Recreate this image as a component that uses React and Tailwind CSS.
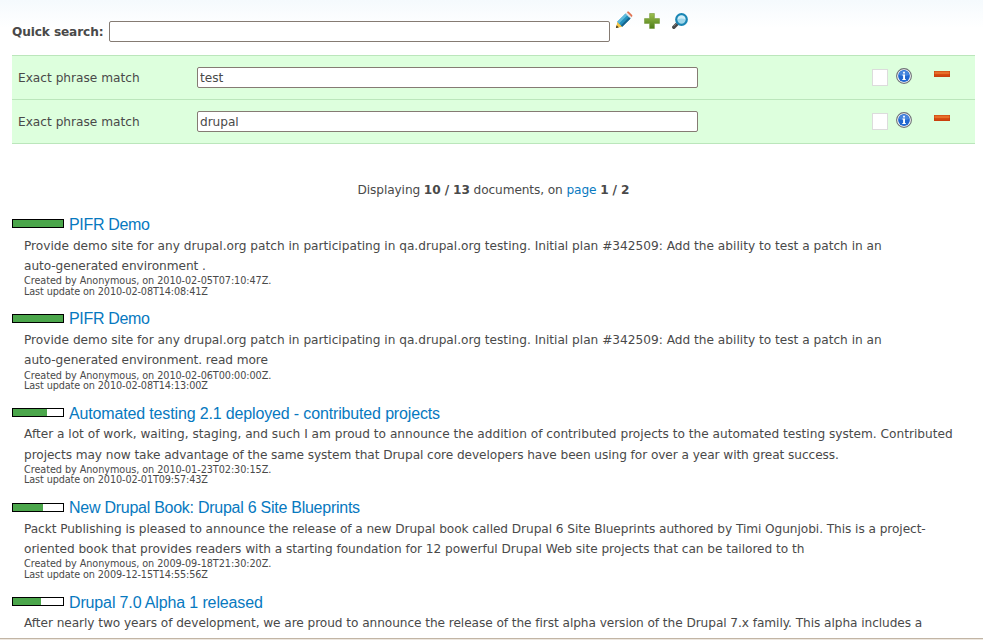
import React, { useState } from 'react'

const results = [
  {
    title: 'PIFR Demo',
    titleSpacing: 'tracking-[-0.33px]',
    score: 50,
    lines: [
      ['Provide demo site for any drupal.org patch in participating in qa.drupal.org testing. Initial plan #342509: Add the ability to test a patch in an', 'tracking-[-0.005px]'],
      ['auto-generated environment .', 'tracking-[-0.07px]']
    ],
    created: '2010-02-05T07:10:47Z',
    updated: '2010-02-08T14:08:41Z'
  },
  {
    title: 'PIFR Demo',
    titleSpacing: 'tracking-[-0.33px]',
    score: 50,
    lines: [
      ['Provide demo site for any drupal.org patch in participating in qa.drupal.org testing. Initial plan #342509: Add the ability to test a patch in an', 'tracking-[-0.005px]'],
      ['auto-generated environment. read more', 'tracking-[-0.07px]']
    ],
    created: '2010-02-06T00:00:00Z',
    updated: '2010-02-08T14:13:00Z'
  },
  {
    title: 'Automated testing 2.1 deployed - contributed projects',
    titleSpacing: 'tracking-[-0.15px]',
    score: 34,
    lines: [
      ['After a lot of work, waiting, staging, and such I am proud to announce the addition of contributed projects to the automated testing system. Contributed', 'tracking-[-0.006px]'],
      ['projects may now take advantage of the same system that Drupal core developers have been using for over a year with great success.', 'tracking-[-0.075px]']
    ],
    created: '2010-01-23T02:30:15Z',
    updated: '2010-02-01T09:57:43Z'
  },
  {
    title: 'New Drupal Book: Drupal 6 Site Blueprints',
    titleSpacing: 'tracking-[-0.26px]',
    score: 30,
    lines: [
      ['Packt Publishing is pleased to announce the release of a new Drupal book called Drupal 6 Site Blueprints authored by Timi Ogunjobi. This is a project-', 'tracking-[-0.067px]'],
      ['oriented book that provides readers with a starting foundation for 12 powerful Drupal Web site projects that can be tailored to th', 'tracking-[-0.043px]']
    ],
    created: '2009-09-18T21:30:20Z',
    updated: '2009-12-15T14:55:56Z'
  },
  {
    title: 'Drupal 7.0 Alpha 1 released',
    titleSpacing: 'tracking-[-0.14px]',
    score: 28,
    lines: [
      ['After nearly two years of development, we are proud to announce the release of the first alpha version of the Drupal 7.x family. This alpha includes a', 'tracking-[-0.07px]']
    ]
  }
]

function PencilIcon() {
  return (
    <svg width="18" height="18" viewBox="0 0 18 18">
      <path d="M1 17 2.4 10.8l5 5z" fill="#f7c544" />
      <path d="m.9 17.1.7-2.9 2.2 2.2z" fill="#3b3320" />
      <path d="M2.2 10.8 10.6 2.4l5 5-8.4 8.4z" fill="#2490bd" />
      <path d="m2.4 10.8 8.2-8.3 1.7 1.7-8.3 8.2z" fill="#5fbbdc" />
      <path d="m5.9 14.5 8.3-8.4 1.4 1.4-8.3 8.3z" fill="#17648c" />
      <path d="m10.6 2.5 1.3-1.3 5 5-1.3 1.3z" fill="#e4e8ea" />
      <path d="m11.9 1.2.4-.4c.5-.4 1.1-.4 1.6 0l3.2 3.2c.4.5.4 1.1 0 1.6l-.5.5z" fill="#e0704e" />
    </svg>
  )
}

function PlusIcon() {
  return (
    <svg width="16" height="16" viewBox="0 0 16 16">
      <defs>
        <linearGradient id="plus" x1="0" y1="0" x2="0" y2="1">
          <stop offset="0" stopColor="#9cc04e" />
          <stop offset="1" stopColor="#4d7d18" />
        </linearGradient>
      </defs>
      <path d="M5.6.5h4.8v5.1h5.1v4.8h-5.1v5.1H5.6v-5.1H.5V5.6h5.1z" fill="url(#plus)" stroke="#75993a" strokeWidth=".6" />
    </svg>
  )
}

function MagnifierIcon() {
  return (
    <svg width="16" height="16" viewBox="0 0 16 16">
      <path d="m5.8 10.2-4 4" stroke="#484848" strokeWidth="3.4" strokeLinecap="round" />
      <path d="m5 10-3.2 3.2" stroke="#888" strokeWidth=".8" />
      <circle cx="9.5" cy="6.5" r="5.3" fill="#9fd6ea" stroke="#1b86b4" strokeWidth="2.2" />
      <path d="M5.6 6.4a3.9 3.9 0 0 1 7.8 0c-2.2-1.2-5.4-1.2-7.8 0" fill="#d3eff8" />
    </svg>
  )
}

function InfoIcon() {
  return (
    <svg width="16" height="16" viewBox="0 0 16 16">
      <circle cx="8" cy="8" r="7.4" fill="#fff" stroke="#6d7176" strokeWidth="1.1" />
      <circle cx="8" cy="8" r="5.9" fill="#2268cf" />
      <path d="M2.8 7a5.3 5.3 0 0 1 10.4 0c-3 1.2-7 1.2-10.4 0" fill="#4686dd" />
      <path d="M7.1 3.7h1.8v1.7H7.1zM6.4 6.5H9v4.4h.8v1.1H6.3v-1.1h.8V7.6h-.7z" fill="#fff" />
    </svg>
  )
}

function MinusIcon() {
  return (
    <svg width="16" height="6" viewBox="0 0 16 6">
      <path d="M0 0h16v6H0z" fill="#c9400d" />
      <path d="M.5.5h15V3H.5z" fill="#e66f2a" />
      <path d="M1 3h14v1.5H1z" fill="#d84c10" />
    </svg>
  )
}

function FilterRow({ initial }) {
  const [value, setValue] = useState(initial)

  return (
    <div className="flex h-[44px] border-b border-[#bbe6bb] pl-[6px]">
      <label className="w-[179px] pt-[12px] leading-[20px]">Exact phrase match</label>
      <input
        className="mt-[11px] h-[21px] w-[501px] rounded-[2px] border border-[#857b73] bg-white px-[2px] tracking-[-0.05px] outline-none"
        value={value}
        onChange={e => setValue(e.target.value)}
      />
      <span className="mt-[13px] ml-[174px] h-[17px] w-[16px] border border-[#dcdcdc] bg-white" />
      <span className="mt-[12px] ml-[8px]"><InfoIcon /></span>
      <span className="mt-[15px] ml-[22px]"><MinusIcon /></span>
    </div>
  )
}

function Result({ item }) {
  return (
    <div className="h-[94.4px]">
      <div className="flex h-[23.3px] items-center">
        <div className="mr-[5px] h-[9px] w-[52px] border border-black bg-white">
          <div className="h-full bg-[#4ba64b]" style={{ width: item.score }} />
        </div>
        <h2 className={`pt-[1.1px] font-['Liberation_Sans',sans-serif] text-[16px] leading-[23px] whitespace-nowrap text-[#0779bf] ${item.titleSpacing}`}>{item.title}</h2>
      </div>
      <div className="pl-[12px]">
        {item.lines.map(([text, spacing]) => (
          <p key={text} className={`leading-[20.4px] whitespace-nowrap ${spacing}`}>{text}</p>
        ))}
        {item.created && (
          <div className="-mt-[0.3px] text-[9.7px] leading-[10.6px]">
            <p className="tracking-[-0.065px]">Created by Anonymous, on {item.created}.</p>
            <p className="tracking-[-0.12px]">Last update on {item.updated}</p>
          </div>
        )}
      </div>
    </div>
  )
}

export default function App() {
  const [query, setQuery] = useState('')

  return (
    <div className="flex h-[640px] flex-col overflow-hidden bg-white font-['DejaVu_Sans',sans-serif] text-[12.16px] text-[#494949]">
      <div className="min-h-0 flex-1 overflow-hidden bg-linear-to-b from-[#f5fafd] to-white to-[28px] pr-[8px] pl-[12px]">
        <div className="flex h-[55px]">
          <label className="w-[97px] pt-[22px] leading-[20px] font-bold tracking-[-0.13px] whitespace-nowrap">Quick search:</label>
          <input
            className="mt-[21px] h-[21px] w-[501px] rounded-[2px] border border-[#857b73] bg-white px-[2px] outline-none"
            value={query}
            onChange={e => setQuery(e.target.value)}
          />
          <span className="mt-[11px] ml-[5px]"><PencilIcon /></span>
          <span className="mt-[13px] ml-[11px]"><PlusIcon /></span>
          <span className="mt-[13px] ml-[12px]"><MagnifierIcon /></span>
        </div>

        <div className="border-t border-[#bbe6bb] bg-[#ddffdd]">
          <FilterRow initial="test" />
          <FilterRow initial="drupal" />
        </div>

        <p className="mt-[36px] h-[32.3px] text-center leading-[20px] tracking-[-0.11px]">
          Displaying <b>10 / 13</b> documents, on <a className="text-[#0779bf]">page</a> <b>1 / 2</b>
        </p>

        {results.map((item, i) => (
          <Result key={i} item={item} />
        ))}
      </div>
      <div className="h-[2px] border-t border-[#c2b5a5] bg-[#ede7df]" />
    </div>
  )
}
